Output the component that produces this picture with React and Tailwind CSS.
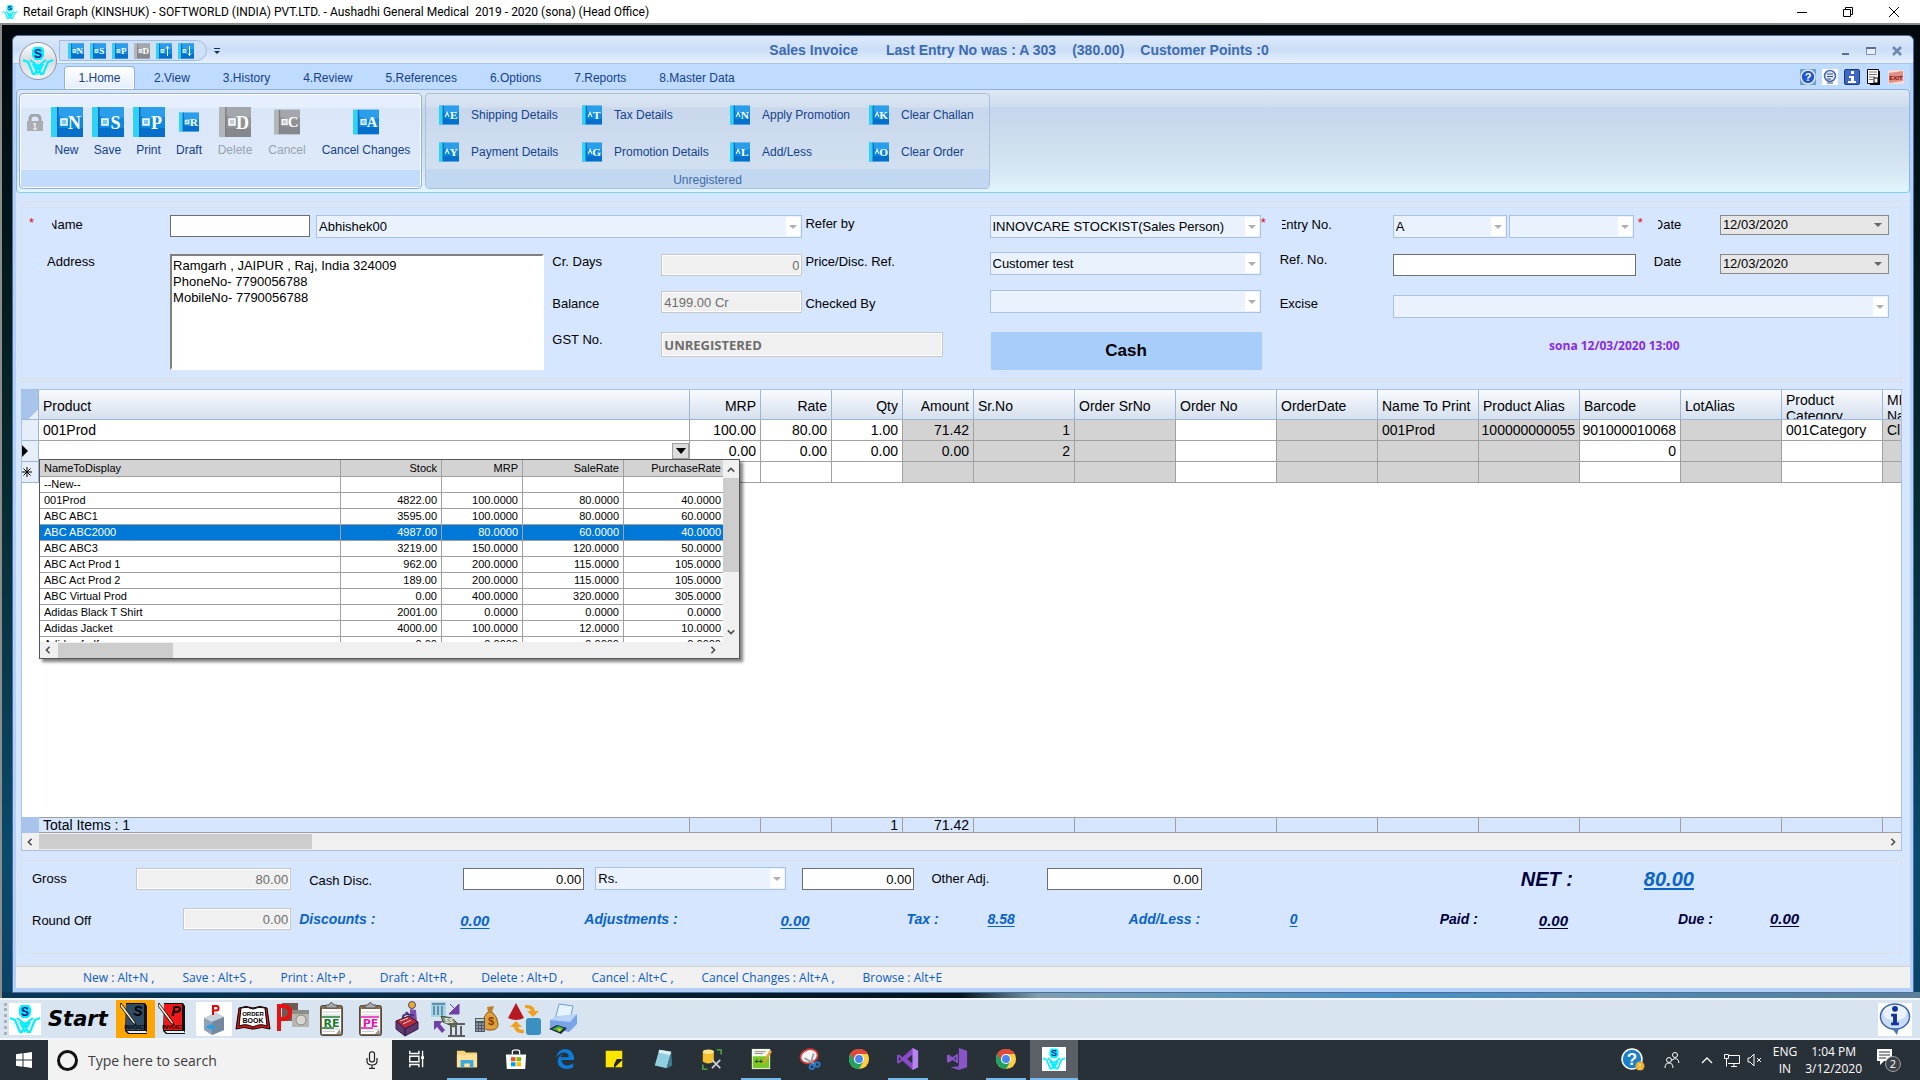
import React from "react";

/* ---------- shared bits ---------- */

function Logo({ className }) {
  return (
    <svg viewBox="0 0 32 32" className={className} aria-hidden="true">
      <path d="M12 2h8l2 3v6l-3 4h-6l-3-4V5z" fill="#00f0ff" />
      <text x="16" y="12.5" textAnchor="middle" fontFamily="Liberation Sans" fontWeight="bold" fontSize="12" fill="#00108a">S</text>
      <path d="M1 15l5 2 5 12h2l3-8 3 8h2l5-12 5-2M8 15l5 4 3 3 3-3 5-4M11 19l5 9 5-9" fill="none" stroke="#00f0ff" strokeWidth="2.2" />
    </svg>
  );
}

function BookIcon({ letter, mark = "▫", gray = false, className }) {
  return (
    <svg viewBox="0 0 32 32" preserveAspectRatio="none" className={className} aria-hidden="true">
      <rect x="0" y="1" width="32" height="30" fill={gray ? "#8f9296" : "#0a8ae0"} />
      <path d="M7 1h25v10Q18 16 7 9z" fill={gray ? "#a3a6aa" : "#2a9eea"} />
      <path d="M7 31h25v-9H7z" fill={gray ? "#85888c" : "#0470cc"} />
      <rect x="0" y="1" width="6" height="30" fill={gray ? "#b4b7ba" : "#2fd3f7"} />
      <rect x="6" y="1" width="1.5" height="30" fill={gray ? "#7d8084" : "#0a62b8"} />
      {mark === "^" ? (
        <path d="M10 19l3-7 3 7" fill="none" stroke="#fff" strokeWidth="1.8" />
      ) : (
        <rect x="10" y="13" width="6" height="6" fill={gray ? "#c9cbcd" : "#7cc4f2"} stroke="#fff" strokeWidth="1.5" />
      )}
      {letter === "up" || letter === "down" ? (
        <path d={letter === "up" ? "M23 26V7m-3 4l3-4 3 4" : "M23 6v19m-3-4l3 4 3-4"} fill="none" stroke="#fff" strokeWidth="2" />
      ) : (
        <text x="23.5" y="22.5" textAnchor="middle" fontFamily="Liberation Serif" fontWeight="bold" fontSize="18" fill="#fff">{letter}</text>
      )}
    </svg>
  );
}

const tri = "pointer-events-none h-0 w-0 border-x-4 border-t-4 border-x-transparent";

function Combo({ id, label, value = "", date = false, className = "" }) {
  return (
    <div className={"relative self-start " + className}>
      <select
        id={id}
        aria-label={label}
        defaultValue={value}
        className={
          "block w-full appearance-none border pl-0.5 pr-4 text-[13px] text-black outline-none " +
          (date ? "h-5 border-[#8a8a8a] bg-[#e6e6e6]" : "h-[23px] border-[#a9c1e4] bg-[#e9f2fd]")
        }
      >
        <option value={value}>{value}</option>
      </select>
      <span className={"pointer-events-none absolute inset-y-0.5 right-0.5 flex w-3.5 items-center justify-center " + (date ? "" : "bg-white")}>
        <span className={tri + (date ? " mr-1 border-t-[#666]" : " border-t-[#b0b0b0]")} />
      </span>
    </div>
  );
}

function Field({ id, label, value = "", off = false, right = false, className = "" }) {
  return (
    <input
      id={id}
      aria-label={label}
      readOnly={off}
      defaultValue={value}
      className={
        "block h-[22px] min-w-0 border px-0.5 text-[13px] outline-none " +
        (off ? "border-[#c8c8c8] bg-[#f0f0f0] text-[#6d6d6d] shadow-[inset_0_0_0_1px_white] " : "border-[#6f6f6f] bg-white text-black ") +
        (right ? "text-right " : "") +
        className
      }
    />
  );
}

function Chevron({ dir }) {
  const d = { left: "M7 1L3 5l4 4", right: "M3 1l4 4-4 4", up: "M1 7l4-4 4 4", down: "M1 3l4 4 4-4" }[dir];
  return (
    <svg viewBox="0 0 10 10" className="h-2 w-2" aria-hidden="true">
      <path d={d} fill="none" stroke="#505050" strokeWidth="2" />
    </svg>
  );
}

/* ---------- window chrome ---------- */

function TitleBar() {
  return (
    <header className="flex h-[25px] items-center border-b-2 border-[#8c8c8c] bg-white pl-0.5">
      <Logo className="h-4 w-4" />
      <h1 className="ml-[5px] flex-1 whitespace-pre font-[Roboto,sans-serif] text-[12px] leading-none text-black">
        Retail Graph (KINSHUK) - SOFTWORLD (INDIA) PVT.LTD. - Aushadhi General Medical  2019 - 2020 (sona) (Head Office)
      </h1>
      <div className="mr-5 flex items-center gap-[34px]">
        <button aria-label="Minimize" className="h-3 w-3"><svg viewBox="0 0 12 12"><path d="M1 6.5h10" stroke="#000" /></svg></button>
        <button aria-label="Restore" className="h-3 w-3"><svg viewBox="0 0 12 12"><path d="M1.500 3.500h7v7h-7zM3.500 3.500v-2h7v7h-2" fill="none" stroke="#000" /></svg></button>
        <button aria-label="Close" className="h-3 w-3"><svg viewBox="0 0 12 12"><path d="M1 1l10 10M11 1L1 11" stroke="#000" /></svg></button>
      </div>
    </header>
  );
}

function DocumentTitle() {
  return (
    <div className="relative flex h-7 items-center rounded-t-md border-b border-[#a5c5f0] bg-linear-to-b from-[#dde9f9] via-[#cbdef7] to-[#e6f0fd] pt-0.5">
      <div className="absolute left-1.5 top-1.5 z-10 flex h-[38px] w-[38px] items-center justify-center rounded-full border border-[#8a96a8] bg-linear-to-b from-white via-[#d8dade] to-[#f4f4f6]">
        <Logo className="h-8 w-8" />
      </div>
      <div className="ml-[46px] flex h-[21px] items-center gap-1.5 rounded-r-full border border-[#9fbce4] bg-[#cfe0f7] pl-2 pr-3">
        {["N", "S", "P", "D", "up", "down"].map((l) => (
          <button key={l} aria-label={"Quick " + l} className="h-4 w-4"><BookIcon letter={l} gray={l === "D"} className="h-4 w-4" /></button>
        ))}
      </div>
      <button aria-label="Customize" className="ml-1 flex w-3 flex-col items-center gap-0.5">
        <span className="h-px w-1.5 bg-[#15305c]" />
        <span className="h-0 w-0 border-x-3 border-t-3 border-x-transparent border-t-[#15305c]" />
      </button>
      <h2 className="flex flex-1 justify-center whitespace-nowrap pr-6 text-[14px] font-bold text-[#3c6bb0]">
        <span>Sales Invoice</span>
        <span className="ml-7">Last Entry No was : A 303</span>
        <span className="ml-4">(380.00)</span>
        <span className="ml-4">Customer Points :0</span>
      </h2>
      <div className="mr-2.5 flex items-center gap-3.5">
        <button aria-label="Minimize document" className="h-3 w-3"><svg viewBox="0 0 12 12"><path d="M3 9h7" stroke="#5a6f92" strokeWidth="2" /></svg></button>
        <button aria-label="Maximize document" className="h-3 w-3"><svg viewBox="0 0 12 12"><path d="M1.500 2.500h9v7h-9z" fill="#e6eefa" stroke="#7e93b8" /><path d="M1 3h10" stroke="#5a6f92" strokeWidth="2" /></svg></button>
        <button aria-label="Close document" className="h-3 w-3"><svg viewBox="0 0 12 12"><path d="M2 2l8 8M10 2l-8 8" stroke="#6f88b0" strokeWidth="2.600" /></svg></button>
      </div>
    </div>
  );
}

const tabs = ["1.Home", "2.View", "3.History", "4.Review", "5.References", "6.Options", "7.Reports", "8.Master Data"];

function TabRow() {
  return (
    <nav className="flex h-[25px] items-end gap-px bg-[#bfdbff] pl-12 text-[12px] text-[#15428b]">
      {tabs.map((t, i) => (
        <button
          key={t}
          className={
            i === 0
              ? "mr-0.5 h-[23px] w-[71px] rounded-t border border-b-0 border-[#8db2e3] bg-linear-to-b from-white to-[#e4eefb] shadow-[inset_0_0_0_1px_white]"
              : "h-[23px] px-4"
          }
        >
          {t}
        </button>
      ))}
      <div className="ml-auto mr-1.5 flex h-full items-center gap-1.5">
        <button aria-label="Help" className="h-4 w-4"><svg viewBox="0 0 16 16"><rect width="16" height="16" fill="#6fa0d8" /><circle cx="8" cy="8" r="7" fill="#2458cc" stroke="#e8eefc" strokeWidth="1.500" /><text x="8" y="12" textAnchor="middle" fontFamily="Liberation Sans" fontWeight="bold" fontSize="11" fill="#fff">?</text></svg></button>
        <button aria-label="Print preview" className="h-4 w-4"><svg viewBox="0 0 16 16"><rect width="16" height="16" fill="#fff" /><circle cx="8" cy="7" r="5.500" fill="#dfe8f8" stroke="#4a66a8" strokeWidth="1.500" /><path d="M5 5h6M5 7.500h6M5 10h4M5 14h6" stroke="#3a4f88" /></svg></button>
        <button aria-label="Information" className="h-4 w-4"><svg viewBox="0 0 16 16"><rect x=".5" y=".5" width="15" height="15" rx="1.500" fill="#3c68c0" stroke="#1b3a88" /><rect x="7" y="2" width="3" height="3" fill="#fff" /><path d="M5 7h5v5h2v2H4v-2h3V9H5z" fill="#fff" /></svg></button>
        <button aria-label="Document" className="h-4 w-4"><svg viewBox="0 0 16 16"><path d="M3 2h11v14H4z" fill="#000" /><path d="M1.500.5h11v14h-11z" fill="#fff" stroke="#000" /><path d="M3 3h8M3 5.500h8M3 8h6M3 10.500h4" stroke="#777" /><rect x="8" y="9" width="4" height="5" fill="#fff" stroke="#000" /></svg></button>
        <button aria-label="Exit" className="h-4 w-4"><svg viewBox="0 0 16 16"><rect y="1" width="16" height="14" fill="#f5dcd8" /><path d="M1 4l14-2v10L1 14z" fill="#dc9088" /><text x="8" y="11" textAnchor="middle" fontFamily="Liberation Sans" fontWeight="bold" fontSize="6" fill="#8c0a0a">EXIT</text></svg></button>
      </div>
    </nav>
  );
}

const mainActions = [
  { t: "New", l: "N", w: "w-[41px]", s: "h-8 w-8" },
  { t: "Save", l: "S", w: "w-[41px]", s: "h-8 w-8" },
  { t: "Print", l: "P", w: "w-[41px]", s: "h-8 w-8" },
  { t: "Draft", l: "R", w: "w-10", s: "h-5 w-5" },
  { t: "Delete", l: "D", w: "w-[52px]", s: "h-8 w-8", gray: true },
  { t: "Cancel", l: "C", w: "w-[52px]", s: "h-[26px] w-[26px]", gray: true },
  { t: "Cancel Changes", l: "A", w: "w-[106px]", s: "h-[26px] w-[26px]" },
];

const detailActions = [
  ["E", "Shipping Details"], ["T", "Tax Details"], ["N", "Apply Promotion"], ["K", "Clear Challan"],
  ["Y", "Payment Details"], ["G", "Promotion Details"], ["L", "Add/Less"], ["O", "Clear Order"],
];

function Ribbon() {
  return (
    <div className="flex h-[104px] gap-[3px] rounded border border-[#8db2e3] border-b-[#7fd5e6] bg-[linear-gradient(180deg,#dde7f4_0,#d0dded_16%,#c5d6ee_17%,#d0e0ee_60%,#d8e8f4_82%,#e2f5fe_100%)] py-[3px] pl-0.5 text-[12px] text-[#15428b]">
      <section className="flex w-[403px] flex-col justify-between rounded-sm border border-[#8fb3de] bg-[linear-gradient(180deg,#e6effd_0,#e6effd_14%,#dae7f9_15%,#dfeaf8_100%)] shadow-[inset_0_0_0_1px_white]">
        <div className="flex h-[78px] items-start pl-1.5 pt-3">
          <svg viewBox="0 0 18 18" className="mr-0.5 mt-2 h-[18px] w-[18px]" aria-hidden="true">
            <path d="M4 9V5q0-4 5-4t5 4v4" fill="none" stroke="#a2a5aa" strokeWidth="3" />
            <rect x="1" y="7" width="16" height="10" fill="#a9acb0" />
            <path d="M9 9v6M7 10h3M7 15h4" stroke="#e6e8ea" strokeWidth="1.500" />
          </svg>
          {mainActions.map((a) => (
            <button key={a.t} disabled={a.gray} className={"flex flex-col items-center " + a.w + (a.gray ? " text-[#9aa2ad]" : "")}>
              <span className="flex h-8 items-center"><BookIcon letter={a.l} gray={a.gray} className={a.s} /></span>
              <span className="mt-1 whitespace-nowrap leading-4">{a.t}</span>
            </button>
          ))}
        </div>
        <div className="mx-px mb-px h-[18px] bg-[#c3dcfc]" />
      </section>
      <section className="flex w-[565px] flex-col justify-between rounded-sm border border-[#a9bfdd] bg-[linear-gradient(180deg,#dbe6f3_0,#d3dfee_14%,#c8d7ec_15%,#d3e3f1_100%)]">
        <div className="grid grid-cols-[143px_148px_139px_1fr] gap-y-[17px] pl-[13px] pt-[11px]">
          {detailActions.map(([l, t]) => (
            <button key={t} className="flex h-5 items-center gap-3 whitespace-nowrap text-left"><BookIcon letter={l} mark="^" className="h-5 w-5" />{t}</button>
          ))}
        </div>
        <h3 className="h-[19px] bg-[#c1d8f0] text-center leading-[22px] text-[#3e6aaa]">Unregistered</h3>
      </section>
    </div>
  );
}

/* ---------- invoice header ---------- */

function CutLabel({ htmlFor, children, className = "" }) {
  return (
    <label htmlFor={htmlFor} className={"block overflow-hidden -indent-1 leading-5 " + className}>{children}</label>
  );
}

function InvoiceForm() {
  return (
    <section className="ml-[5px] mr-2 mt-[5px] grid grid-cols-[148fr_382fr_109fr_144fr_184fr_290fr_113fr_261fr_66fr_181fr] grid-rows-[37px_38px_42px_40px] border border-[#dcdfe4] pb-1.5 pt-[7px] text-[13px] leading-4 text-black">
      <div className="flex">
        <span className="ml-[7px] text-red-600">*</span>
        <CutLabel htmlFor="code" className="ml-[18px]">Name</CutLabel>
      </div>
      <div className="col-span-3 flex gap-1.5 pr-[3px]">
        <Field id="code" className="w-[140px]" />
        <Combo label="Customer" value="Abhishek00" className="flex-1" />
      </div>
      <label htmlFor="refer" className="pt-px">Refer by</label>
      <div className="flex pr-[19px]">
        <Combo id="refer" value="INNOVCARE STOCKIST(Sales Person)" className="flex-1" />
        <span className="w-0 text-red-600">*</span>
      </div>
      <CutLabel htmlFor="entry" className="ml-0.5">Entry No.</CutLabel>
      <div className="flex gap-0.5 pr-2.5">
        <Combo id="entry" value="A" className="w-[114px]" />
        <Combo label="Entry number" className="flex-1" />
        <span className="ml-0.5 w-1.5 text-red-600">*</span>
      </div>
      <CutLabel htmlFor="date1" className="ml-1">Date</CutLabel>
      <Combo id="date1" value="12/03/2020" date className="mr-3" />

      <label htmlFor="address" className="ml-[25px] mt-0.5">Address</label>
      <textarea id="address" className="row-span-3 mr-2 mt-0.5 h-[116px] resize-none border-2 border-b-white border-l-[#808080] border-r-white border-t-[#808080] bg-white px-px pt-0.5 text-[13px] leading-4 outline-none" defaultValue={"Ramgarh , JAIPUR , Raj, India 324009\nPhoneNo- 7790056788\nMobileNo- 7790056788"} />
      <label htmlFor="days" className="mt-0.5">Cr. Days</label>
      <Field id="days" value="0" off right className="mr-[3px] mt-0.5" />
      <label htmlFor="price" className="mt-0.5">Price/Disc. Ref.</label>
      <Combo id="price" value="Customer test" className="mr-[19px]" />
      <label htmlFor="ref">Ref. No.</label>
      <Field id="ref" className="mr-[18px] mt-0.5" />
      <label htmlFor="date2" className="mt-0.5">Date</label>
      <Combo id="date2" value="12/03/2020" date className="mr-3 mt-0.5" />

      <div />
      <label htmlFor="balance" className="mt-1.5">Balance</label>
      <Field id="balance" value="4199.00 Cr" off className="mr-[3px] mt-px" />
      <label htmlFor="checked" className="mt-1.5">Checked By</label>
      <Combo id="checked" className="mr-[19px]" />
      <label htmlFor="excise" className="mt-1.5">Excise</label>
      <Combo id="excise" className="col-span-3 mr-3 mt-[5px]" />

      <div />
      <label htmlFor="gst">GST No.</label>
      <Field id="gst" value="UNREGISTERED" off className="col-span-2 mr-[47px] h-[25px] font-['Open_Sans',sans-serif] text-[12px] font-bold" />
      <button className="ml-px mr-[18px] h-[38px] bg-[#a8cdfa] text-[17px] font-bold">Cash</button>
      <p className="col-span-4 ml-12 pt-1.5 text-center font-['Open_Sans',sans-serif] text-[12px] font-bold leading-4 text-[#8a2be2]">sona 12/03/2020 13:00</p>
    </section>
  );
}

/* ---------- item grid ---------- */

const cols = [
  { h: "MRP", w: 71, r: true }, { h: "Rate", w: 71, r: true }, { h: "Qty", w: 71, r: true },
  { h: "Amount", w: 71, r: true, g: true }, { h: "Sr.No", w: 101, g: true }, { h: "Order SrNo", w: 101, g: true },
  { h: "Order No", w: 101 }, { h: "OrderDate", w: 101, g: true }, { h: "Name To Print", w: 101, g: true },
  { h: "Product Alias", w: 101, g: true }, { h: "Barcode", w: 101 }, { h: "LotAlias", w: 101, g: true },
  { h: "Product Category", w: 101 }, { h: "MF Name", w: 18, g: true },
];

const rows = [
  ["100.00", "80.00", "1.00", "71.42", "1", "", "", "", "001Prod", "100000000055", "901000010068", "", "001Category", "Cl"],
  ["0.00", "0.00", "0.00", "0.00", "2", "", "", "", "", "", "0", "", "", ""],
  ["", "", "", "", "", "", "", "", "", "", "", "", "", ""],
];

const totals = ["", "", "1", "71.42", "", "", "", "", "", "", "", "", "", ""];
const isNum = (v) => /^[\d.]+$/.test(v);

function Cols() {
  return (
    <colgroup>
      <col className="w-[17px]" />
      <col />
      {cols.map((c) => <col key={c.h} style={{ width: c.w }} />)}
    </colgroup>
  );
}

const stock = [
  ["--New--", "", "", "", ""],
  ["001Prod", "4822.00", "100.0000", "80.0000", "40.0000"],
  ["ABC ABC1", "3595.00", "100.0000", "80.0000", "60.0000"],
  ["ABC ABC2000", "4987.00", "80.0000", "60.0000", "40.0000"],
  ["ABC ABC3", "3219.00", "150.0000", "120.0000", "50.0000"],
  ["ABC Act Prod 1", "962.00", "200.0000", "115.0000", "105.0000"],
  ["ABC Act Prod 2", "189.00", "200.0000", "115.0000", "105.0000"],
  ["ABC Virtual Prod", "0.00", "400.0000", "320.0000", "305.0000"],
  ["Adidas Black T Shirt", "2001.00", "0.0000", "0.0000", "0.0000"],
  ["Adidas Jacket", "4000.00", "100.0000", "12.0000", "10.0000"],
  ["Adidas furlf", "0.00", "0.0000", "0.0000", "0.0000"],
];

function ProductPopup() {
  return (
    <div className="absolute left-[17px] top-[69px] z-20 w-[701px] border border-[#555] bg-[#f0f0f0] shadow-[3px_3px_3px_rgba(0,0,0,0.5)]">
      <div className="flex h-[182px]">
        <div className="flex-1 overflow-hidden bg-white">
          <table className="w-full table-fixed border-separate border-spacing-0 text-[11px] leading-[15px]">
            <colgroup>
              <col className="w-[301px]" /><col className="w-[101px]" /><col className="w-[81px]" /><col className="w-[101px]" /><col />
            </colgroup>
            <thead className="bg-[#d3d3d3]">
              <tr className="h-[17px]">
                {["NameToDisplay", "Stock", "MRP", "SaleRate", "PurchaseRate"].map((h, i) => (
                  <th key={h} className={"border-b border-r border-[#a0a0a0] p-0 font-normal last:border-r-0 " + (i ? "pr-1 text-right last:pr-0.5" : "pl-1 text-left")}>{h}</th>
                ))}
              </tr>
            </thead>
            <tbody>
              {stock.map((r, k) => (
                <tr key={r[0]} className={"h-4 " + (k === 3 ? "bg-[#0078d7] text-white" : "")}>
                  {r.map((v, i) => (
                    <td key={i} className={"border-b border-r border-[#a0a0a0] p-0 last:border-r-0 " + (i ? "pr-1 text-right last:pr-0.5" : "pl-1")}>{v}</td>
                  ))}
                </tr>
              ))}
            </tbody>
          </table>
        </div>
        <div className="flex w-4 flex-col items-center justify-between py-1.5">
          <Chevron dir="up" />
          <span className="mb-auto mt-1 h-[94px] w-4 bg-[#cdcdcd]" />
          <Chevron dir="down" />
        </div>
      </div>
      <div className="flex h-4 items-center px-1">
        <Chevron dir="left" />
        <span className="ml-1.5 mr-auto h-[15px] w-[115px] bg-[#cdcdcd]" />
        <span className="mr-[18px]"><Chevron dir="right" /></span>
      </div>
    </div>
  );
}

function ItemGrid() {
  return (
    <section className="ml-[5px] mr-2 mt-0.5 flex flex-1 flex-col border-t border-[#dcdfe4] pt-[7px] text-[14px] text-black">
      <div className="relative flex flex-1 flex-col border border-[#a9c1e4] bg-white">
        <table className="w-full table-fixed border-separate border-spacing-0 leading-4">
          <Cols />
          <thead>
            <tr className="h-[30px] bg-linear-to-b from-[#f8fbfd] to-[#d5dfee]">
              <th className="border-b border-r border-[#9eb6d3] bg-[linear-gradient(135deg,#a9c4eb_78%,#e6eef8_79%)] p-0" />
              <th className="border-b border-r border-[#9eb6d3] p-0 pl-1 pt-0.5 text-left font-normal">Product</th>
              {cols.map((c, i) => (
                <th key={c.h} className={"h-[30px] border-b border-r border-[#9eb6d3] p-0 pl-1 font-normal last:border-r-0 " + (c.r ? "pr-1 text-right" : "text-left")}>
                  <div className={"overflow-hidden " + (i < 12 ? "whitespace-nowrap pt-0.5" : "h-7 pt-px")}>{c.h}</div>
                </th>
              ))}
            </tr>
          </thead>
          <tbody>
            {rows.map((r, k) => (
              <tr key={k} className="h-[21px]">
                <th className="border-b border-r border-[#9eb6d3] bg-[#e6eff9] p-0 text-left align-middle text-[16px] font-normal leading-3">
                  {k === 1 && <span className="block h-0 w-0 border-y-6 border-l-6 border-y-transparent border-l-black" />}
                  {k === 2 && (
                    <svg viewBox="0 0 10 10" className="h-2.5 w-2.5" aria-label="New row"><path d="M5 0v10M0 5h10M1.500 1.500l7 7M8.500 1.500l-7 7" stroke="#000" /></svg>
                  )}
                </th>
                <td className="border-b border-r border-[#a0a0a0] p-0 pl-1">
                  {k === 0 && "001Prod"}
                  {k === 1 && (
                    <div className="flex h-5 items-center">
                      <input aria-label="Product" className="min-w-0 flex-1 outline-none" />
                      <button aria-label="Open product list" className="flex h-4 w-[17px] items-center justify-center border border-[#a0a0a0] bg-[#dcdcdc]">
                        <span className="h-0 w-0 border-x-5 border-t-6 border-x-transparent border-t-black" />
                      </button>
                    </div>
                  )}
                </td>
                {r.map((v, i) => (
                  <td key={i} className={"border-b border-r border-[#a0a0a0] p-0 last:border-r-0 " + (cols[i].g ? "bg-[#d3d3d3] " : "") + (isNum(v) ? "pr-1 text-right" : "pl-1")}>
                    <div className="flex h-5 items-center overflow-hidden whitespace-nowrap"><span className={isNum(v) ? "ml-auto" : ""}>{v}</span></div>
                  </td>
                ))}
              </tr>
            ))}
          </tbody>
        </table>
        <ProductPopup />
        <div className="flex-1" />
        <table className="w-full table-fixed border-separate border-spacing-0 bg-[#d6e6ff] leading-[14px]">
          <Cols />
          <tbody>
            <tr className="h-4">
              <th className="bg-[#a9c4eb] p-0" />
              <td className="border-y border-r border-[#a0a0a0] p-0 pl-1">Total Items : 1</td>
              {totals.map((v, i) => (
                <td key={i} className="border-y border-r border-[#a0a0a0] p-0 pr-1 text-right last:border-r-0">{v}</td>
              ))}
            </tr>
          </tbody>
        </table>
        <div className="flex h-[17px] items-center justify-between bg-[#f0f0f0] px-1">
          <Chevron dir="left" />
          <span className="ml-[5px] mr-auto h-[15px] w-[273px] bg-[#cdcdcd]" />
          <Chevron dir="right" />
        </div>
      </div>
    </section>
  );
}

/* ---------- totals and hints ---------- */

const link = "underline underline-offset-2";

function Totals() {
  return (
    <section className="ml-[5px] mr-2 mt-[9px] border border-[#dcdfe4] pb-[23px] pt-1.5 text-[13px] leading-4 text-black">
      <div className="grid grid-cols-[114fr_155fr_172fr_121fr_11fr_191fr_16fr_112fr_132fr_155fr_319fr_123fr_257fr] items-center">
        <label htmlFor="gross" className="pl-2.5">Gross</label>
        <Field id="gross" value="80.00" off right />
        <label htmlFor="disc" className="pl-[18px] pt-1">Cash Disc.</label>
        <Field id="disc" value="0.00" right />
        <span />
        <Combo label="Discount unit" value="Rs." />
        <span />
        <Field label="Discount value" value="0.00" right />
        <label htmlFor="adj" className="pl-[17px]">Other Adj.</label>
        <Field id="adj" value="0.00" right />
        <span />
        <strong className="text-[20px] italic leading-6 text-[#00003c]">NET :</strong>
        <a href="#net" className={"text-[20px] font-bold italic leading-6 text-[#0a64c8] " + link}>80.00</a>
      </div>
      <div className="mt-[17px] grid grid-cols-[161fr_116fr_161fr_124fr_196fr_126fr_81fr_141fr_161fr_150fr_99fr_139fr_92fr_131fr] items-center text-[14px] font-bold italic text-[#0a64c8]">
        <label htmlFor="round" className="pl-2.5 pt-1 text-[13px] font-normal not-italic text-black">Round Off</label>
        <Field id="round" value="0.00" off right className="mr-2 font-normal not-italic" />
        <span>Discounts :</span>
        <a href="#disc" className={"pt-1 text-[15px] " + link}>0.00</a>
        <span>Adjustments :</span>
        <a href="#adj" className={"pt-1 text-[15px] " + link}>0.00</a>
        <span>Tax :</span>
        <a href="#tax" className={link}>8.58</a>
        <span>Add/Less :</span>
        <a href="#addless" className={link}>0</a>
        <span className="text-[#00003c]">Paid :</span>
        <a href="#paid" className={"pt-1 text-[15px] text-[#00003c] " + link}>0.00</a>
        <span className="text-[#00003c]">Due :</span>
        <a href="#due" className={"text-[15px] text-[#00003c] " + link}>0.00</a>
      </div>
    </section>
  );
}

const hints = ["New : Alt+N ,", "Save : Alt+S ,", "Print : Alt+P ,", "Draft : Alt+R ,", "Delete : Alt+D ,", "Cancel : Alt+C ,", "Cancel Changes : Alt+A ,", "Browse : Alt+E"];

/* ---------- launcher toolbar ---------- */

function Invoice({ color, letter }) {
  return (
    <svg viewBox="0 0 32 34" className="h-[34px] w-8" aria-hidden="true">
      <path d="M6 1h19l2 3v28H8l-3-3z" fill="#111" />
      <rect x="6" y="2" width="18" height="26" fill={color} />
      <path d="M7 29h19l1 2H9z" fill="#eee" />
      <path d="M1 1l14 19 1 3-3-2L0 4z" fill="#f0e6c8" stroke="#000" strokeWidth=".8" />
      <text x="18" y="14" textAnchor="middle" fontFamily="Liberation Sans" fontStyle="italic" fontWeight="bold" fontSize="14" fill="#000">{letter}</text>
      <text x="15.500" y="27" textAnchor="middle" fontFamily="Liberation Sans" fontWeight="bold" fontSize="5.500" fill="#000">INVOICE</text>
    </svg>
  );
}

function Clipboard({ text, color }) {
  return (
    <svg viewBox="0 0 28 36" className="h-9 w-7" aria-hidden="true">
      <rect x="2.500" y="4.500" width="22" height="30" rx="2" fill="#8c6a44" stroke="#4a4a4a" />
      <rect x="4" y="8" width="19" height="25" fill="#fff" />
      <path d="M8 7V4h3q2-5 5 0h3v3z" fill="#aaa" stroke="#555" />
      <path d="M5 11h17M5 14h17M5 28h17M5 30.500h12" stroke="#ccc" />
      <path d="M4 16h18M4 27h12" stroke={color} strokeWidth="1.500" />
      <text x="13.500" y="25.500" textAnchor="middle" fontFamily="DejaVu Sans" fontWeight="bold" fontSize="11" fill={color}>{text}</text>
      <path d="M22 28l-4 5h5z" fill="#999" />
    </svg>
  );
}

function Launcher() {
  return (
    <div className="flex h-[42px] items-center border-y-2 border-[#f2f5f9] bg-[#d8e4f0] pl-1">
      <span className="mr-0.5 h-8 w-0 border-l-3 border-dotted border-[#a8b0ba]" />
      <Logo className="h-8 w-8 bg-white" />
      <button className="ml-[7px] w-[68px] text-left font-['DejaVu_Sans',sans-serif] text-[21px] font-bold italic leading-none text-black">Start</button>
      <button aria-label="Sales invoice" className="flex h-full w-[39px] items-center justify-center bg-[#ffa500]"><Invoice color="#2f4a63" letter="S" /></button>
      <button aria-label="Purchase invoice" className="ml-[3px]"><Invoice color="#f01818" letter="P" /></button>
      <button aria-label="Cash register" className="ml-1.5 bg-white">
        <svg viewBox="0 0 36 34" className="h-[34px] w-9"><path d="M8 16l12-5 8 4v13l-12 5-8-5z" fill="#8da0b4" /><path d="M8 16l12-5 8 4-12 5z" fill="#c6d2de" /><path d="M16 20l12-5v13l-12 5z" fill="#7488a0" /><path d="M10 25q5-5 9 0-1 5-9 0" fill="#2aa0e0" /><path d="M17 13V4h3.500q2 0 2 2.300t-2 2.300H17" fill="none" stroke="#f00000" strokeWidth="2" /></svg>
      </button>
      <button aria-label="Order book" className="ml-[3px]">
        <svg viewBox="0 0 36 28" className="h-7 w-9"><path d="M4 3q7-3 14 0 7-3 14 0l3 21q-8-3-16 0h-2q-8-3-16 0z" fill="#e01010" stroke="#000" /><path d="M6 3q6-2 12 1 6-3 12-1l2 18q-7-3-14 1-7-4-14-1z" fill="#fff" stroke="#000" /><text x="18" y="11" textAnchor="middle" fontFamily="Liberation Sans" fontWeight="bold" fontSize="6" fill="#000">ORDER</text><text x="18" y="18" textAnchor="middle" fontFamily="Liberation Sans" fontWeight="bold" fontSize="7" fill="#000">BOOK</text></svg>
      </button>
      <button aria-label="Purchase" className="ml-1">
        <svg viewBox="0 0 36 34" className="h-[34px] w-9"><rect x="7" y="1" width="16" height="18" fill="#6d5a55" /><rect x="17" y="8" width="17" height="17" fill="#b7b7b0" /><rect x="17" y="8" width="17" height="4" fill="#8d8d88" /><circle cx="26" cy="18" r="5" fill="#d8d8d2" stroke="#888" /><path d="M4 29V4h4q7 0 7 6.500t-7 6.500H4" fill="none" stroke="#e81010" strokeWidth="4" /></svg>
      </button>
      <button aria-label="Receipt entry" className="ml-[7px]"><Clipboard text="RE" color="#1a7a2e" /></button>
      <button aria-label="Payment entry" className="ml-[11px]"><Clipboard text="PE" color="#e018b0" /></button>
      <button aria-label="Cash box" className="ml-[9px]">
        <svg viewBox="0 0 28 36" className="h-9 w-7"><circle cx="18" cy="4" r="3.500" fill="#e8b020" stroke="#5a3a90" /><path d="M16 8l6 1 1 12-7 2z" fill="#7a50b0" /><path d="M14 13q-6 0-5 5M12 11q3 4 8 3" fill="none" stroke="#4a3080" strokeWidth="2" /><path d="M2 20l13-5 9 6-13 7z" fill="#b82838" stroke="#3a1830" /><path d="M2 20l9 8v7l-9-7zM11 28l13-7v7l-13 7z" fill="#5c3a70" stroke="#3a1850" /><path d="M6 20l8-3M9 23l8-4" stroke="#f0d0d0" /></svg>
      </button>
      <button aria-label="Bank transfer" className="ml-2">
        <svg viewBox="0 0 36 36" className="h-9 w-9"><rect x="1" y="1" width="15" height="15" fill="#a8d4e8" /><path d="M2 3h13M4 5v9M8 5v9M12 5v9" stroke="#4a7a94" strokeWidth="1.500" /><path d="M20 3l7 7m2-7v10H19l4-4z" fill="#7040a8" stroke="#7040a8" /><path d="M4 20h9l-3 3 5 6-3 3-5-6-3 3z" fill="#7040a8" /><path d="M11 15l11 2 6 6-4 3-11-5z" fill="#789068" stroke="#3c4c34" /><text x="19" y="22" textAnchor="middle" fontFamily="Liberation Sans" fontSize="8" fill="#fff">$$</text><path d="M19 24h16v-2H19zM20 25h2v9h-2zM25 25h2v9h-2zM30 25h2v9h-2zM18 34h17v2H18z" fill="#5e5e5e" /></svg>
      </button>
      <button aria-label="Cash" className="ml-[7px]">
        <svg viewBox="0 0 28 28" className="h-7 w-7"><path d="M15 7q-6 6-5 13 1 6 8 5 7 0 7-6 0-7-6-12z" fill="#e0a038" stroke="#8a5a18" /><path d="M14 2l7-1-2 6h-4z" fill="#c08028" /><text x="18" y="20" textAnchor="middle" fontFamily="Liberation Sans" fontWeight="bold" fontSize="11" fill="#8a3a08">$</text><rect x="2" y="13" width="10" height="14" fill="#50586a" /><path d="M3 15h8" stroke="#b8d8c0" strokeWidth="2" /><path d="M4 18v8M7 18v8M10 18v8" stroke="#c8ccd4" strokeDasharray="2 1" /></svg>
      </button>
      <button aria-label="Convert" className="ml-[7px]">
        <svg viewBox="0 0 34 34" className="h-[34px] w-[34px]"><path d="M8 1l8 15q-8 4-16 0z" fill="#b81820" /><path d="M17 3q9-1 10 6h4l-6 6-6-6h4q-1-3-6-3z" fill="#f0a020" /><path d="M16 31q-9 1-10-6H2l6-6 6 6h-4q1 3 6 3z" fill="#f0a020" /><rect x="18" y="16" width="15" height="17" rx="3" fill="#3a90c0" /></svg>
      </button>
      <button aria-label="Printer" className="ml-[5px]">
        <svg viewBox="0 0 32 34" className="h-[34px] w-8"><path d="M12 2l14 2-3 14H8z" fill="#e6f2fc" stroke="#6aa0d8" /><path d="M3 18l8-4 15 1 4-3v10l-8 8-19-4z" fill="#7aa4e8" /><path d="M3 18l8-4 19-2-7 8z" fill="#b8d4f8" /><path d="M2 27l8-4 10 3-6 6z" fill="#20283c" /><path d="M5 27l6-3 6 2-4 4z" fill="#38b048" /><path d="M10 26l5 1-3 3z" fill="#e0d020" /></svg>
      </button>
      <button aria-label="About" className="ml-auto mr-2 bg-white">
        <svg viewBox="0 0 34 34" className="h-[33px] w-[34px]"><ellipse cx="17" cy="14" rx="15" ry="13" fill="#c8dcf4" stroke="#3c64a8" strokeWidth="1.500" /><path d="M14 26l5 7 2-7z" fill="#4a74b8" /><ellipse cx="17" cy="10" rx="12" ry="8" fill="#eaf3fd" /><circle cx="17" cy="6" r="3" fill="#14309c" /><path d="M13 11h6v9h2v3h-8v-3h2v-6h-2z" fill="#14309c" /></svg>
      </button>
    </div>
  );
}

/* ---------- taskbar ---------- */

const Chrome = (
  <svg viewBox="0 0 24 24"><circle cx="12" cy="12" r="11" fill="#ffcd40" /><path d="M12 12L2.500 6.500A11 11 0 0 1 21.500 6.500L12 6.500z" fill="#e04a3a" /><path d="M2.500 6.500A11 11 0 0 0 12 23l5-8.500L12 12z" fill="#1ea362" /><path d="M12 6.500h9.500A11 11 0 0 0 2.500 6.500L7.200 14z" fill="#e04a3a" /><circle cx="12" cy="12" r="5.500" fill="#fff" /><circle cx="12" cy="12" r="4.300" fill="#4587f3" /></svg>
);

const taskIcons = [
  { n: "Task View", i: <svg viewBox="0 0 24 24"><path d="M3 3v3h10V3M3 21v-3h10v3M3 9h10v6H3zM17 3v18" fill="none" stroke="#fff" strokeWidth="1.500" /><rect x="15.500" y="9" width="3" height="3" fill="#fff" /></svg> },
  { n: "File Explorer", on: true, i: <svg viewBox="0 0 24 24"><path d="M1 3h8l2 2h12v16H1z" fill="#f7d174" /><path d="M1 7h22v14H1z" fill="#fde19a" /><path d="M5 21v-8h14v8h-4v-4H9v4z" fill="#3ea8e0" /></svg> },
  { n: "Store", i: <svg viewBox="0 0 24 24"><path d="M8 7V4q0-2 4-2t4 2v3" fill="none" stroke="#fff" strokeWidth="1.300" /><path d="M1 7h22l-1 16H2z" fill="#fff" /><rect x="6.500" y="10" width="5" height="4.500" fill="#f25022" /><rect x="12.500" y="10" width="5" height="4.500" fill="#7fba00" /><rect x="6.500" y="15.500" width="5" height="4.500" fill="#00a4ef" /><rect x="12.500" y="15.500" width="5" height="4.500" fill="#ffb900" /></svg> },
  { n: "Edge", i: <svg viewBox="0 0 24 24"><path d="M2 11Q4 1 13 1q9 1 9 12H8q1 6 7 6 3 0 6-2v4q-3 2-7 2-9 0-10-8 0-6 6-9-3 3-3 4h9q0-5-5-5-5 0-9 6z" fill="#0c7cd8" /></svg> },
  { n: "Sticky Notes", i: <svg viewBox="0 0 24 24"><path d="M3 3h18v18H3z" fill="#ffe600" /><path d="M21 12v1l-8 8h-1v-3l3-6z" fill="#222" /></svg> },
  { n: "Notepad", i: <svg viewBox="0 0 24 24"><path d="M8 2l13 2-5 18-13-3z" fill="#8fcfe0" /><path d="M8 2l13 2-1 4L7 5z" fill="#d8eef4" /><path d="M21 4l1 15-6 3z" fill="#3d7c90" /></svg> },
  { n: "Database Tools", i: <svg viewBox="0 0 24 24"><path d="M2 4q6-4 12 0v11q-6 4-12 0z" fill="#f4c22c" /><ellipse cx="8" cy="4" rx="6" ry="2.500" fill="#fde58c" /><path d="M12 13l9 9M21 13l-9 9" stroke="#c8ccd0" strokeWidth="2" /><path d="M17 2h5v5M2 18v5h5" fill="none" stroke="#50b848" strokeWidth="1.500" /></svg> },
  { n: "Notepad++", on: true, i: <svg viewBox="0 0 24 24"><path d="M2 1h20v22H2z" fill="#f4f8e8" /><path d="M3 9h18v13H3z" fill="#78c828" /><path d="M5 4h12M5 6h9" stroke="#888" /><text x="5" y="17" fontFamily="Liberation Sans" fontWeight="bold" fontSize="8" fill="#203c10">++</text><path d="M22 2l-8 13-1 3 3-2 8-12z" fill="#e8a030" /></svg> },
  { n: "Snipping Tool", i: <svg viewBox="0 0 24 24"><ellipse cx="11" cy="9" rx="9.500" ry="7.500" fill="#f4f4f4" stroke="#d83a3a" strokeWidth="2" transform="rotate(-20 11 9)" /><path d="M6 11l12 7M16 6l-3 10" stroke="#9aa0a8" strokeWidth="2" /><circle cx="20" cy="18" r="2.500" fill="none" stroke="#2878c8" strokeWidth="2" /><circle cx="14" cy="20.500" r="2.500" fill="none" stroke="#2878c8" strokeWidth="2" /></svg> },
  { n: "Chrome", i: Chrome },
  { n: "Visual Studio", on: true, i: <svg viewBox="0 0 24 24"><path d="M17 0l6 3v18l-6 3L6 14l-4 3-2-1V8l2-1 4 3zM17 7l-6 5 6 5zM2 9.500v5L4.500 12z" fill="#8a4bc8" fillRule="evenodd" /><path d="M17 0l6 3v18l-6 3z" fill="#b884f0" /></svg> },
  { n: "Visual Studio Installer", i: <svg viewBox="0 0 24 24"><path d="M14 0l9 3v18l-9 3-9-3 9-1V5zM13 6v11l-6-4-4 3-2-1V8l2-1 4 3zM11 9.500L9 11.500l2 2z" fill="#8a55c8" fillRule="evenodd" /></svg> },
  { n: "Chrome window", on: true, i: Chrome },
];

function Taskbar() {
  return (
    <footer className="flex h-10 items-center bg-[#293138] font-['Open_Sans',sans-serif] text-[12px] text-white">
      <button aria-label="Start menu" className="flex w-12 justify-center">
        <svg viewBox="0 0 16 16" className="h-4 w-4"><path d="M0 2.200l6.500-.9v6.200H0zM7.500 1.200L16 0v7.500H7.500zM0 8.500h6.500v6.200L0 13.800zM7.500 8.500H16V16l-8.500-1.200z" fill="#fff" /></svg>
      </button>
      <div className="mr-px flex h-full w-[344px] items-center bg-[#f2f2f2] pl-[9px]">
        <span className="h-[21px] w-[21px] rounded-full border-3 border-[#111]" />
        <input aria-label="Search" placeholder="Type here to search" className="ml-2.5 flex-1 text-[14px] outline-none placeholder:text-[#3c3c3c]" />
        <svg viewBox="0 0 12 18" className="mr-3.5 h-[18px] w-3"><rect x="3.500" y=".8" width="5" height="10" rx="2" fill="none" stroke="#222" strokeWidth="1.200" /><path d="M1 7v3q0 4 5 4t5-4V7M6 14v3M3 17.300h6" fill="none" stroke="#222" strokeWidth="1.200" /></svg>
      </div>
      {taskIcons.map((t) => (
        <button key={t.n} aria-label={t.n} className="flex h-full w-[49px] flex-col items-center">
          <span className="flex flex-1 items-center"><span className="block h-[22px] w-[22px]">{t.i}</span></span>
          <span className={"h-0.5 w-10 " + (t.on ? "bg-[#76b9ed]" : "")} />
        </button>
      ))}
      <button aria-label="Retail Graph" className="flex h-full w-12 flex-col items-center bg-[#5a6066]">
        <span className="flex flex-1 items-center"><Logo className="h-6 w-6 bg-white" /></span>
        <span className="h-0.5 w-full bg-[#76b9ed]" />
      </button>
      <div className="ml-auto flex h-full items-center">
        <svg viewBox="0 0 24 24" className="mr-[18px] h-6 w-6" aria-label="Help"><circle cx="11" cy="11" r="10" fill="#1a80cc" stroke="#fff" strokeWidth="1.500" /><text x="11" y="17" textAnchor="middle" fontFamily="Liberation Sans" fontWeight="bold" fontSize="17" fill="#fff">?</text><circle cx="19" cy="18" r="4.500" fill="#f0b030" /><path d="M19 15.500v3M19 19.800v1" stroke="#fff" /></svg>
        <svg viewBox="0 0 18 18" className="mr-5 h-[18px] w-[18px]" aria-label="People"><circle cx="6" cy="9" r="2.500" fill="none" stroke="#fff" /><circle cx="12" cy="4" r="2.500" fill="none" stroke="#fff" /><path d="M2 17q0-5 4-5t4 5M9 9q6-4 7 3" fill="none" stroke="#fff" /></svg>
        <svg viewBox="0 0 12 8" className="mr-2.5 h-2 w-3" aria-label="Hidden icons"><path d="M1 7l5-5 5 5" fill="none" stroke="#fff" strokeWidth="1.300" /></svg>
        <svg viewBox="0 0 18 16" className="mr-1.5 h-4 w-[18px]" aria-label="Network"><path d="M5 3.500h11.500v8H5M11 11.500v3M8 14.500h6M1.500 2.500h4v4h-4zM3.500 6.500v8" fill="none" stroke="#fff" /></svg>
        <svg viewBox="0 0 16 14" className="mr-2.5 h-3.5 w-4" aria-label="Muted"><path d="M1 5h2l4-4v12L3 9H1zM10 5l4 4M14 5l-4 4" fill="none" stroke="#fff" /></svg>
        <div className="text-center leading-[17px]">ENG<br />IN</div>
        <div className="ml-2 text-center leading-[17px]">1:04 PM<br />3/12/2020</div>
        <svg viewBox="0 0 28 28" className="ml-3 mr-[18px] h-7 w-7" aria-label="Notifications"><path d="M3 3h15v12h-8l-4 4v-4H3z" fill="#fff" /><path d="M5 6h11M5 9h11M5 12h7" stroke="#293138" /><circle cx="19" cy="18" r="7.500" fill="#3c444a" stroke="#9aa0a4" /><text x="19" y="22" textAnchor="middle" fontFamily="Open Sans" fontSize="11" fill="#fff">2</text></svg>
      </div>
    </footer>
  );
}

/* ---------- page ---------- */

export default function App() {
  return (
    <div className="flex min-h-screen flex-col overflow-hidden bg-white font-['Liberation_Sans',Arial,sans-serif]">
      <TitleBar />
      <main className="flex flex-1 flex-col border-l-2 border-[#8c8c8c] bg-[linear-gradient(90deg,#0a3a58_0%,#04141c_50%,#7d9fae_54%,#4a90c0_72%,#5b7f96_100%),linear-gradient(180deg,#00080c_0%,#06282c_45%,#0a4a6c_85%,#0a4468_100%)] bg-[length:100%_6px,100%_100%] bg-bottom bg-no-repeat px-2.5 pb-[5px] pt-2.5">
        <div className="-mr-1 flex flex-1 flex-col rounded-t-md border border-[#4b6fa5] bg-[#d6e6ff]">
          <DocumentTitle />
          <div className="flex flex-1 flex-col border-x-[3px] border-b-4 border-[#b5d0f7]">
            <TabRow />
            <Ribbon />
            <div className="mt-2 border-t border-[#dcdfe4]" />
            <InvoiceForm />
            <ItemGrid />
            <Totals />
            <div className="mt-2.5 border-t border-[#dcdfe4]" />
            <div className="mt-px flex h-[22px] items-center gap-7 border-t border-[#cfd3d8] bg-[#f0f0f0] pl-[67px] font-['Open_Sans',sans-serif] text-[12px] text-[#0a5cc8]">
              {hints.map((h) => <span key={h}>{h}</span>)}
            </div>
          </div>
        </div>
      </main>
      <Launcher />
      <Taskbar />
    </div>
  );
}
